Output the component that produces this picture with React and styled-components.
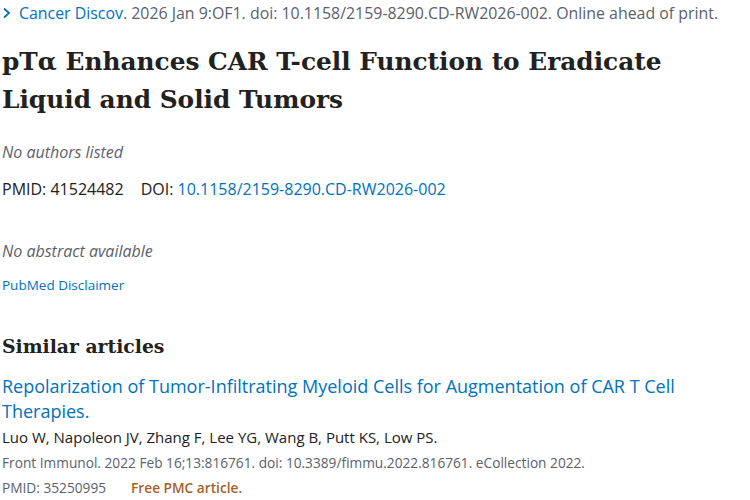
import React from "react";
import styled, { createGlobalStyle } from "styled-components";

const Global = createGlobalStyle`
  html, body { margin: 0; padding: 0; background: #fff; }
  body { font-family: "Open Sans", "Noto Sans", sans-serif; color: #212121; }
`;

const Page = styled.div`
  padding: 2px 0 0 2px;
  display: flex;
  flex-direction: column;
`;

const CiteRow = styled.div`
  display: flex;
  align-items: center;
  gap: 8px;
  font-size: 15.9px;
  line-height: 22px;
  color: #5b616b;
  white-space: nowrap;
`;

const Chevron = styled.svg`
  width: 9px;
  height: 12px;
  flex: none;
`;

const Link = styled.a`
  color: #0071bc;
  text-decoration: none;
`;

const Title = styled.h1`
  margin: 19px 0 0;
  font-family: "DejaVu Serif", serif;
  font-weight: bold;
  font-size: 24.8px;
  line-height: 38px;
  color: #212121;
`;

const Italic = styled.div`
  font-style: italic;
  font-size: 16px;
  color: #5b616b;
  line-height: 22px;
  margin-top: ${(p) => p.$mt}px;
`;

const IdRow = styled.div`
  display: flex;
  gap: 17px;
  font-size: 16px;
  line-height: 22px;
  margin-top: 15px;
`;

const Small = styled.div`
  font-size: 13.5px;
  line-height: 20px;
  margin-top: ${(p) => p.$mt}px;
`;

const H2 = styled.h2`
  margin: 37px 0 0;
  font-family: "DejaVu Serif", serif;
  font-weight: bold;
  font-size: 18.8px;
  line-height: 28px;
  color: #212121;
`;

const ArticleTitle = styled.a`
  display: block;
  margin-top: 14px;
  margin-bottom: 1px;
  color: #0071bc;
  text-decoration: none;
  font-size: 18px;
  line-height: 25px;
  max-width: 700px;
`;

const Meta = styled.div`
  font-size: ${(p) => p.$size || 13.7}px;
  line-height: 25px;
  color: ${(p) => p.$color || "#5b616b"};
  display: flex;
  gap: 25px;
`;

const Free = styled.span`
  color: #a85f2a;
  font-weight: 600;
`;

export default function App() {
  return (
    <>
      <Global />
      <Page>
        <CiteRow>
          <Chevron viewBox="0 0 9 12">
            <path d="M2 1.5 L7 6 L2 10.5" fill="none" stroke="#0071bc" strokeWidth="1.8" />
          </Chevron>
          <span>
            <Link href="#">Cancer Discov.</Link> 2026 Jan 9:OF1. doi: 10.1158/2159-8290.CD-RW2026-002. Online ahead of print.
          </span>
        </CiteRow>
        <Title>pTα Enhances CAR T-cell Function to Eradicate<br />Liquid and Solid Tumors</Title>
        <Italic $mt={22}>No authors listed</Italic>
        <IdRow>
          <span>PMID: 41524482</span>
          <span>DOI: <Link href="#">10.1158/2159-8290.CD-RW2026-002</Link></span>
        </IdRow>
        <Italic $mt={40}>No abstract available</Italic>
        <Small $mt={13}><Link href="#">PubMed Disclaimer</Link></Small>
        <H2>Similar articles</H2>
        <ArticleTitle href="#">Repolarization of Tumor-Infiltrating Myeloid Cells for Augmentation of CAR T Cell Therapies.</ArticleTitle>
        <Meta $color="#212121" $size={15}>Luo W, Napoleon JV, Zhang F, Lee YG, Wang B, Putt KS, Low PS.</Meta>
        <Meta>Front Immunol. 2022 Feb 16;13:816761. doi: 10.3389/fimmu.2022.816761. eCollection 2022.</Meta>
        <Meta><span>PMID: 35250995</span><Free>Free PMC article.</Free></Meta>
      </Page>
    </>
  );
}
